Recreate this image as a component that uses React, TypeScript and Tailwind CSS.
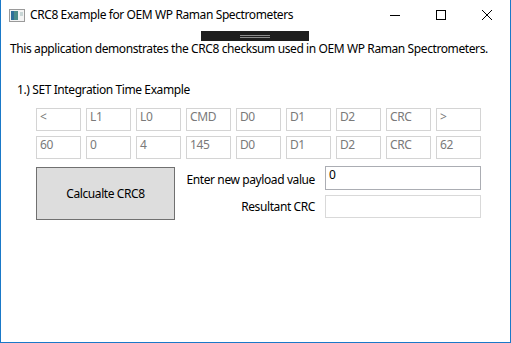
import React from 'react';

const font = { fontFamily: '"Noto Sans", "Open Sans", sans-serif' };

const topRow = ['<', 'L1', 'L0', 'CMD', 'D0', 'D1', 'D2', 'CRC', '>'];
const bottomRow = ['60', '0', '4', '145', 'D0', 'D1', 'D2', 'CRC', '62'];

const Cell: React.FC<{ value: string }> = ({ value }) => (
  <div className="w-[45px] h-[23px] border border-[#d4d4d4] pl-[3px] text-[#7a7a7a] leading-[16px]">{value}</div>
);

const AppIcon = () => (
  <svg width="16" height="13" viewBox="0 0 16 13">
    <rect x="0.5" y="0.5" width="15" height="12" fill="#f4f4f4" stroke="#9a9a9a" />
    <rect x="2" y="2" width="7" height="9" fill="#4b8c8a" />
    <rect x="2" y="2" width="3" height="9" fill="#2f6f9a" />
    <rect x="11" y="3" width="3" height="4" fill="#c9d6d6" />
  </svg>
);

export default function App() {
  return (
    <div className="w-[511px] h-[343px] bg-white text-black text-[12px] tracking-[-0.4px] flex flex-col border-x border-b border-[#1a79c8]" style={font}>
      <header className="h-[31px] flex items-start shrink-0">
        <div className="pl-[8px] pt-[9px]">
          <AppIcon />
        </div>
        <span className="ml-[5px] mt-[7px] leading-[16px]">CRC8 Example for OEM WP Raman Spectrometers</span>
        <div className="ml-auto flex items-start">
          <div className="w-[46px] h-[30px] flex items-center justify-center">
            <svg width="10" height="10" viewBox="0 0 10 10"><path d="M0 5.5h10" stroke="#000" strokeWidth="1" /></svg>
          </div>
          <div className="w-[46px] h-[30px] flex items-center justify-center">
            <svg width="10" height="10" viewBox="0 0 10 10"><rect x="0.5" y="0.5" width="9" height="9" fill="none" stroke="#000" strokeWidth="1" /></svg>
          </div>
          <div className="w-[46px] h-[30px] flex items-center justify-center">
            <svg width="10" height="10" viewBox="0 0 10 10"><path d="M0 0L10 10M10 0L0 10" stroke="#000" strokeWidth="1" /></svg>
          </div>
        </div>
      </header>

      <main className="relative flex-1 pl-[9px]">
        {/* debugger toolbar overlay */}
        <div className="absolute left-[200px] top-0 w-[108px] h-[10px] bg-[#1e1e1e] flex flex-col items-center justify-center gap-[1px]">
          <div className="w-[30px] h-[1px] bg-[#8c8c8c]" />
          <div className="w-[30px] h-[1px] bg-[#8c8c8c]" />
        </div>

        <p className="mt-[10px] leading-[16px] whitespace-nowrap">This application demonstrates the CRC8 checksum used in OEM WP Raman Spectrometers.</p>
        <p className="mt-[25px] ml-[7px] leading-[16px]">1.) SET Integration Time Example</p>

        <div className="ml-[26px] mt-[10px] flex flex-col gap-[5px]">
          <div className="flex gap-[5px]">
            {topRow.map((v, i) => <Cell key={i} value={v} />)}
          </div>
          <div className="flex gap-[5px]">
            {bottomRow.map((v, i) => <Cell key={i} value={v} />)}
          </div>
        </div>

        <div className="ml-[26px] mt-[7px] flex items-start">
          <button className="w-[139px] h-[53px] mt-[1px] bg-[#dddddd] border border-[#707070] flex items-center justify-center leading-[16px]">
            Calcualte CRC8
          </button>
          <div className="flex flex-col gap-[5px]">
            <div className="flex items-start">
              <span className="w-[140px] text-right pt-[6px] leading-[16px]">Enter new payload value</span>
              <div className="ml-[10px] w-[156px] h-[24px] border border-[#abadb3] pl-[3px] leading-[16px]">0</div>
            </div>
            <div className="flex items-start">
              <span className="w-[140px] text-right pt-[4px] leading-[16px]">Resultant CRC</span>
              <div className="ml-[10px] w-[156px] h-[23px] border border-[#d9d9d9]" />
            </div>
          </div>
        </div>
      </main>
    </div>
  );
}
